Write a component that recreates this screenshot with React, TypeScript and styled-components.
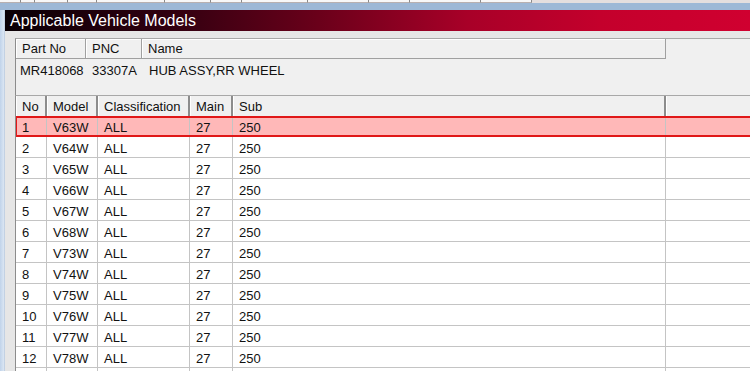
import styled, { createGlobalStyle } from "styled-components";

const GlobalStyle = createGlobalStyle`
  html, body {
    margin: 0;
    padding: 0;
    width: 750px;
    height: 371px;
    overflow: hidden;
    background: #f0f0f0;
    font-family: "Liberation Sans", Arial, sans-serif;
  }
`;

type Row = { no: number; model: string };

const rows: Row[] = [
  { no: 1, model: "V63W" },
  { no: 2, model: "V64W" },
  { no: 3, model: "V65W" },
  { no: 4, model: "V66W" },
  { no: 5, model: "V67W" },
  { no: 6, model: "V68W" },
  { no: 7, model: "V73W" },
  { no: 8, model: "V74W" },
  { no: 9, model: "V75W" },
  { no: 10, model: "V76W" },
  { no: 11, model: "V77W" },
  { no: 12, model: "V78W" },
];

const tabWidths = [20, 13, 32, 28, 67, 45, 30, 65, 60, 40, 70, 50];

const INFO_COLS = "70px 56px 524px 1fr";
const GRID_COLS = "31px 51px 92px 43px 433px 1fr";

export default function App() {
  return (
    <>
      <GlobalStyle />
      <Screen>
        <TabStrip>
          {tabWidths.map((w, i) => (
            <Tab key={i} style={{ width: w }} />
          ))}
        </TabStrip>
        <BlueBand />
        <Body>
          <LeftEdge />
          <Window>
            <TitleBar>Applicable Vehicle Models</TitleBar>
            <Content>
              <InfoPanel>
                <InfoRow>
                  <HeadCell>Part No</HeadCell>
                  <HeadCell>PNC</HeadCell>
                  <HeadCell>Name</HeadCell>
                  <HeadFiller />
                </InfoRow>
                <InfoRow>
                  <ValueCell $pad={4}>MR418068</ValueCell>
                  <ValueCell $pad={6}>33307A</ValueCell>
                  <ValueCell $pad={7}>HUB ASSY,RR WHEEL</ValueCell>
                  <ValueCell $pad={0} />
                </InfoRow>
              </InfoPanel>
              <Grid>
                <GridHead>
                  <GridHeadCell>No</GridHeadCell>
                  <GridHeadCell>Model</GridHeadCell>
                  <GridHeadCell>Classification</GridHeadCell>
                  <GridHeadCell>Main</GridHeadCell>
                  <GridHeadCell>Sub</GridHeadCell>
                  <GridHeadCell $last />
                </GridHead>
                {rows.map((r) => (
                  <GridRow key={r.no} $selected={r.no === 1}>
                    <Cell>{r.no}</Cell>
                    <Cell>{r.model}</Cell>
                    <Cell>ALL</Cell>
                    <Cell>27</Cell>
                    <Cell>250</Cell>
                    <Cell />
                  </GridRow>
                ))}
                <GridRow $selected={false}>
                  <Cell />
                  <Cell />
                  <Cell />
                  <Cell />
                  <Cell />
                  <Cell />
                </GridRow>
              </Grid>
            </Content>
          </Window>
        </Body>
      </Screen>
    </>
  );
}

const Screen = styled.div`
  width: 750px;
  height: 371px;
  display: flex;
  flex-direction: column;
  overflow: hidden;
`;

const TabStrip = styled.div`
  height: 3px;
  display: flex;
  background: #e4dede;
`;

const Tab = styled.div`
  height: 2px;
  border-right: 1px solid #8a8a8a;
  border-bottom: 1px solid #b8b0b0;
  background: #f8f8f8;
`;

const BlueBand = styled.div`
  height: 7px;
  background: #9db8d6;
`;

const Body = styled.div`
  flex: 1;
  display: flex;
  min-height: 0;
`;

const LeftEdge = styled.div`
  width: 5px;
  background: linear-gradient(90deg, #c0d3ea 0%, #d8e4f2 70%, #b8c8dc 100%);
`;

const Window = styled.div`
  flex: 1;
  display: flex;
  flex-direction: column;
  min-width: 0;
`;

const TitleBar = styled.div`
  height: 21px;
  line-height: 21px;
  padding-left: 5px;
  color: #ffffff;
  font-size: 16px;
  background: linear-gradient(
    90deg,
    #0a0005 0%,
    #300010 22%,
    #6a001a 42%,
    #a80028 62%,
    #c4002c 80%,
    #d00030 100%
  );
  white-space: nowrap;
`;

const Content = styled.div`
  flex: 1;
  padding: 7px 0 0 10px;
  background: #e6e6e6;
  display: flex;
  flex-direction: column;
  min-height: 0;
`;

const InfoPanel = styled.div`
  height: 56px;
  background: #f0f0f0;
  border-top: 1px solid #a8a8a8;
  border-left: 1px solid #8c8c8c;
`;

const InfoRow = styled.div`
  display: grid;
  grid-template-columns: ${INFO_COLS};
`;

const HeadCell = styled.div`
  height: 19px;
  line-height: 20px;
  padding-left: 6px;
  font-size: 13px;
  color: #111;
  background: #f0f0f0;
  border-right: 1px solid #a0a0a0;
  border-bottom: 1px solid #a0a0a0;
  box-shadow: inset 1px 1px 0 #ffffff;
  white-space: nowrap;
`;

const HeadFiller = styled.div`
  height: 20px;
  background: #f0f0f0;
`;

const ValueCell = styled.div<{ $pad: number }>`
  height: 24px;
  line-height: 24px;
  padding-left: ${(p) => p.$pad}px;
  font-size: 13px;
  color: #111;
  white-space: nowrap;
`;

const Grid = styled.div`
  flex: 1;
  background: #ffffff;
  border-top: 1px solid #a8a8a8;
  border-left: 1px solid #8c8c8c;
  overflow: hidden;
`;

const GridHead = styled.div`
  display: grid;
  grid-template-columns: ${GRID_COLS};
  height: 20px;
`;

const GridHeadCell = styled.div<{ $last?: boolean }>`
  line-height: 21px;
  padding-left: 6px;
  font-size: 13px;
  color: #111;
  background: #f0f0f0;
  border-right: ${(p) => (p.$last ? "none" : "2px solid #8c8c8c")};
  border-bottom: 1px solid #a0a0a0;
  box-shadow: inset 1px 0 0 #ffffff;
  white-space: nowrap;
`;

const GridRow = styled.div<{ $selected: boolean }>`
  position: relative;
  display: grid;
  grid-template-columns: ${GRID_COLS};
  height: 21px;
  box-sizing: border-box;
  background: ${(p) => (p.$selected ? "#ffb8b8" : "#ffffff")};
  border-bottom: 1px solid ${(p) => (p.$selected ? "#ffb8b8" : "#c4c4c4")};

  &::after {
    content: "";
    display: ${(p) => (p.$selected ? "block" : "none")};
    position: absolute;
    left: -1px;
    top: 0;
    right: -4px;
    bottom: -1px;
    border: 2px solid #e01818;
    pointer-events: none;
  }
`;

const Cell = styled.div`
  display: flex;
  align-items: center;
  padding: 2px 0 0 6px;
  font-size: 13px;
  color: #111;
  border-right: 1px solid #c4c4c4;
  white-space: nowrap;
  &:last-child {
    border-right: none;
  }
`;
